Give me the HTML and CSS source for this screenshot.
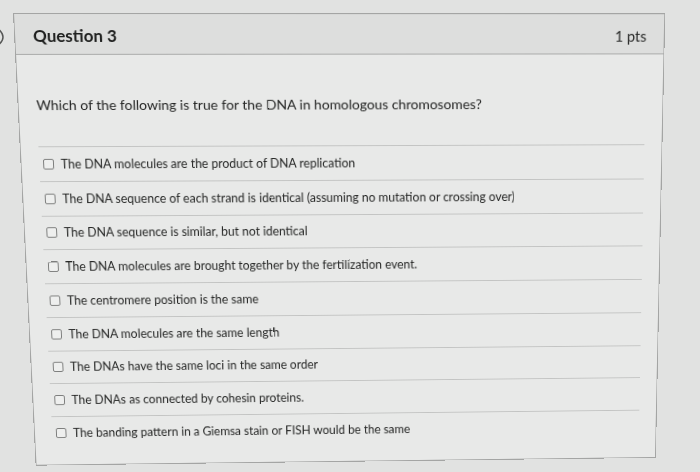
FILE: index.html
```html
<!DOCTYPE html>
<html lang="en">
<head>
<meta charset="utf-8">
<title>Question 3</title>
<link rel="stylesheet" href="styles.css">
</head>
<body>
<div class="page">
  <div class="toggle">
    <svg class="chev" width="10" height="18" viewBox="0 0 10 18"><path d="M1 1.5 Q9 9 1 16.5" fill="none" stroke="#555655" stroke-width="1.5" stroke-linecap="round"/></svg>
  </div>
  <div class="card">
    <div class="card-header">
      <h2 class="q-title">Question 3</h2>
      <span class="q-points">1 pts</span>
    </div>
    <div class="card-body">
      <p class="q-text">Which of the following is true for the DNA in homologous chromosomes?</p>
      <ul class="answers">
        <li class="answer"><span class="box"></span><span class="label">The DNA molecules are the product of DNA replication</span></li>
        <li class="answer"><span class="box"></span><span class="label">The DNA sequence of each strand is identical (assuming no mutation or crossing over)</span></li>
        <li class="answer"><span class="box"></span><span class="label">The DNA sequence is similar, but not identical</span></li>
        <li class="answer"><span class="box"></span><span class="label">The DNA molecules are brought together by the fertilization event.</span></li>
        <li class="answer"><span class="box"></span><span class="label">The centromere position is the same</span></li>
        <li class="answer"><span class="box"></span><span class="label">The DNA molecules are the same length</span></li>
        <li class="answer"><span class="box"></span><span class="label">The DNAs have the same loci in the same order</span></li>
        <li class="answer"><span class="box"></span><span class="label">The DNAs as connected by cohesin proteins.</span></li>
        <li class="answer"><span class="box"></span><span class="label">The banding pattern in a Giemsa stain or FISH would be the same</span></li>
      </ul>
    </div>
  </div>
</div>
</body>
</html>
```

FILE: styles.css
```css
html, body {
  margin: 0;
  padding: 0;
  background: #e1e2e1;
  overflow: hidden;
}

body {
  width: 700px;
  height: 472px;
  font-family: Lato, "Liberation Sans", sans-serif;
  color: #262726;
}

.page {
  display: flex;
  align-items: flex-start;
  padding-top: 13px;
}

.toggle {
  width: 13px;
  height: 40px;
  display: flex;
  align-items: center;
  overflow: hidden;
}

.chev {
  margin-left: -2px;
  margin-top: 7px;
  flex: none;
}

.card {
  width: 664px;
  height: 475px;
  box-sizing: border-box;
  border: 1px solid #a4a5a4;
  background: #e8e9e8;
  transform-origin: 0 0;
  transform: matrix3d(1.00091, 0.000371, 0, 0.00002854, 0.050141, 1.002404, 0, 0.0001093, 0, 0, 1, 0, 0, 0, 0, 1);
}

.card-header {
  height: 41px;
  box-sizing: border-box;
  border-bottom: 1px solid #a9aaa9;
  background: #dddedd;
  display: flex;
  align-items: center;
  justify-content: space-between;
  padding: 3px 18px 0 18px;
}

.q-title {
  margin: 0;
  font-size: 17px;
  font-weight: 700;
  color: #1e1f1e;
}

.q-points {
  font-size: 15px;
  color: #262726;
}

.card-body {
  padding: 0 18px;
}

.q-text {
  margin: 41px 0 0 0;
  font-size: 14.2px;
  line-height: 20px;
  color: #242524;
}

.answers {
  list-style: none;
  margin: 32px 0 0 0;
  padding: 0;
}

.answer {
  height: 35.75px;
  box-sizing: border-box;
  border-top: 1px solid #c3c4c3;
  display: flex;
  align-items: center;
  gap: 7px;
  padding-left: 4px;
  font-size: 12.5px;
  color: #262726;
}

.box {
  width: 11px;
  height: 11px;
  box-sizing: border-box;
  border: 1px solid #7c7d7c;
  border-radius: 2px;
  background: #eeefee;
  flex: none;
}
```
